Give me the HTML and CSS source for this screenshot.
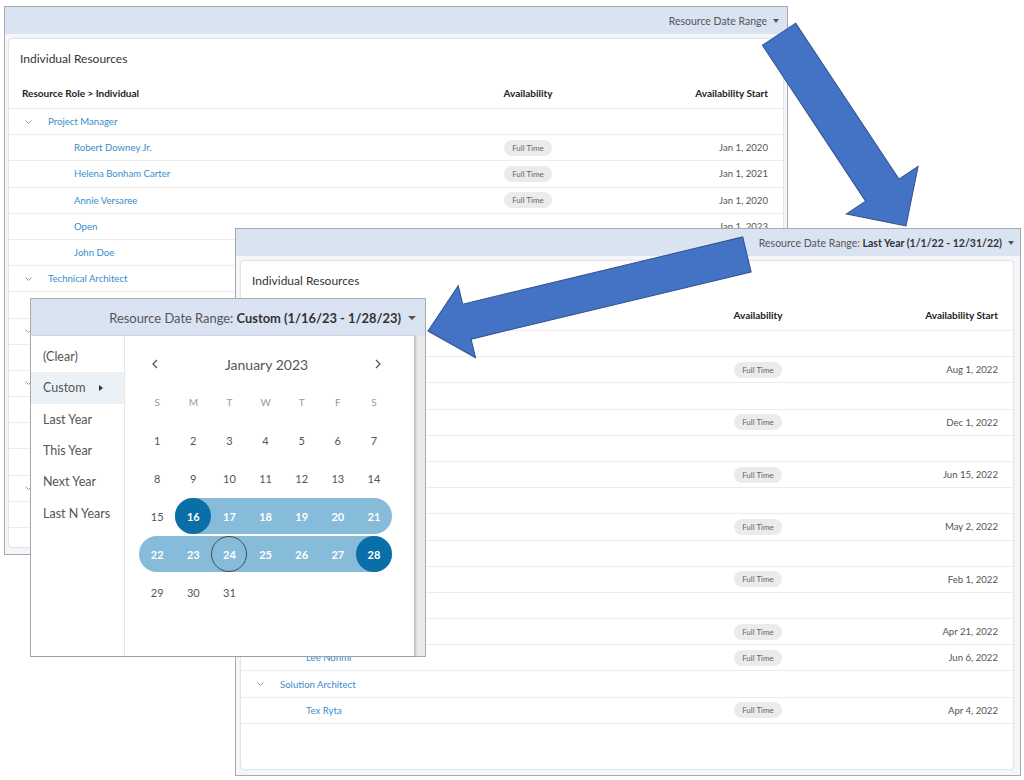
FILE: index.html
```html
<!DOCTYPE html>
<html>
<head>
<meta charset="utf-8">
<link rel="stylesheet" href="styles.css">
</head>
<body>
<div class="canvas">

  <!-- Window A: no range -->
  <div class="win win-a">
    <div class="win-head"><span>Resource Date Range</span><i class="caret"></i></div>
    <div class="win-body">
      <div class="card">
        <div class="card-title">Individual Resources</div>
        <div class="row head"><div class="c-name">Resource Role &gt; Individual</div><div class="c-avail">Availability</div><div class="c-start">Availability Start</div></div>
        <div class="row role"><div class="c-name"><svg class="chev" viewBox="0 0 7 4"><polyline points="0.5,0.5 3.5,3.5 6.5,0.5"/></svg>Project Manager</div><div></div><div></div></div>
        <div class="row ind"><div class="c-name">Robert Downey Jr.</div><div class="c-avail"><span class="pill">Full Time</span></div><div class="c-start">Jan 1, 2020</div></div>
        <div class="row ind"><div class="c-name">Helena Bonham Carter</div><div class="c-avail"><span class="pill">Full Time</span></div><div class="c-start">Jan 1, 2021</div></div>
        <div class="row ind"><div class="c-name">Annie Versaree</div><div class="c-avail"><span class="pill">Full Time</span></div><div class="c-start">Jan 1, 2020</div></div>
        <div class="row ind"><div class="c-name">Open</div><div class="c-avail"></div><div class="c-start">Jan 1, 2023</div></div>
        <div class="row ind"><div class="c-name">John Doe</div><div></div><div></div></div>
        <div class="row role"><div class="c-name"><svg class="chev" viewBox="0 0 7 4"><polyline points="0.5,0.5 3.5,3.5 6.5,0.5"/></svg>Technical Architect</div><div></div><div></div></div>
        <div class="row ind"><div class="c-name"></div><div></div><div></div></div>
        <div class="row role"><div class="c-name"><svg class="chev" viewBox="0 0 7 4"><polyline points="0.5,0.5 3.5,3.5 6.5,0.5"/></svg></div><div></div><div></div></div>
        <div class="row ind"><div class="c-name"></div><div></div><div></div></div>
        <div class="row role"><div class="c-name"><svg class="chev" viewBox="0 0 7 4"><polyline points="0.5,0.5 3.5,3.5 6.5,0.5"/></svg></div><div></div><div></div></div>
        <div class="row ind"><div class="c-name"></div><div></div><div></div></div>
        <div class="row ind"><div class="c-name"></div><div></div><div></div></div>
        <div class="row ind"><div class="c-name"></div><div></div><div></div></div>
        <div class="row role"><div class="c-name"><svg class="chev" viewBox="0 0 7 4"><polyline points="0.5,0.5 3.5,3.5 6.5,0.5"/></svg></div><div></div><div></div></div>
        <div class="row ind"><div class="c-name"></div><div></div><div></div></div>
      </div>
    </div>
  </div>

  <!-- Window B: Last Year -->
  <div class="win win-b">
    <div class="win-head"><span>Resource Date Range: <b>Last Year (1/1/22 - 12/31/22)</b></span><i class="caret"></i></div>
    <div class="win-body">
      <div class="card">
        <div class="card-title">Individual Resources</div>
        <div class="row head"><div class="c-name"></div><div class="c-avail">Availability</div><div class="c-start">Availability Start</div></div>
        <div class="row role"><div class="c-name"></div><div></div><div></div></div>
        <div class="row ind"><div class="c-name"></div><div class="c-avail"><span class="pill">Full Time</span></div><div class="c-start">Aug 1, 2022</div></div>
        <div class="row role"><div class="c-name"></div><div></div><div></div></div>
        <div class="row ind"><div class="c-name"></div><div class="c-avail"><span class="pill">Full Time</span></div><div class="c-start">Dec 1, 2022</div></div>
        <div class="row role"><div class="c-name"></div><div></div><div></div></div>
        <div class="row ind"><div class="c-name"></div><div class="c-avail"><span class="pill">Full Time</span></div><div class="c-start">Jun 15, 2022</div></div>
        <div class="row role"><div class="c-name"></div><div></div><div></div></div>
        <div class="row ind"><div class="c-name"></div><div class="c-avail"><span class="pill">Full Time</span></div><div class="c-start">May 2, 2022</div></div>
        <div class="row role"><div class="c-name"></div><div></div><div></div></div>
        <div class="row ind"><div class="c-name"></div><div class="c-avail"><span class="pill">Full Time</span></div><div class="c-start">Feb 1, 2022</div></div>
        <div class="row role"><div class="c-name"></div><div></div><div></div></div>
        <div class="row ind"><div class="c-name"></div><div class="c-avail"><span class="pill">Full Time</span></div><div class="c-start">Apr 21, 2022</div></div>
        <div class="row ind"><div class="c-name">Lee Nohmi</div><div class="c-avail"><span class="pill">Full Time</span></div><div class="c-start">Jun 6, 2022</div></div>
        <div class="row role"><div class="c-name"><svg class="chev" viewBox="0 0 7 4"><polyline points="0.5,0.5 3.5,3.5 6.5,0.5"/></svg>Solution Architect</div><div></div><div></div></div>
        <div class="row ind"><div class="c-name">Tex Ryta</div><div class="c-avail"><span class="pill">Full Time</span></div><div class="c-start">Apr 4, 2022</div></div>
      </div>
    </div>
  </div>

  <!-- Window C: custom range picker -->
  <div class="win win-c">
    <div class="win-head"><span>Resource Date Range: <b>Custom (1/16/23 - 1/28/23)</b></span><i class="caret"></i></div>
    <div class="drop-area">
      <div class="dropdown">
        <ul class="menu">
          <li>(Clear)</li>
          <li class="active">Custom<i class="tri"></i></li>
          <li>Last Year</li>
          <li>This Year</li>
          <li>Next Year</li>
          <li>Last N Years</li>
        </ul>
        <div class="cal">
          <div class="cal-head">
            <svg class="nav" viewBox="0 0 6 10"><polyline points="5,1 1,5 5,9"/></svg>
            <span class="month">January 2023</span>
            <svg class="nav" viewBox="0 0 6 10"><polyline points="1,1 5,5 1,9"/></svg>
          </div>
          <div class="wk"><span>S</span><span>M</span><span>T</span><span>W</span><span>T</span><span>F</span><span>S</span></div>
          <div class="days">
            <div class="d"><span class="b">1</span></div>
            <div class="d"><span class="b">2</span></div>
            <div class="d"><span class="b">3</span></div>
            <div class="d"><span class="b">4</span></div>
            <div class="d"><span class="b">5</span></div>
            <div class="d"><span class="b">6</span></div>
            <div class="d"><span class="b">7</span></div>
            <div class="d"><span class="b">8</span></div>
            <div class="d"><span class="b">9</span></div>
            <div class="d"><span class="b">10</span></div>
            <div class="d"><span class="b">11</span></div>
            <div class="d"><span class="b">12</span></div>
            <div class="d"><span class="b">13</span></div>
            <div class="d"><span class="b">14</span></div>
            <div class="d"><span class="b">15</span></div>
            <div class="d in first"><span class="b"><span class="dot sel">16</span></span></div>
            <div class="d in"><span class="b">17</span></div>
            <div class="d in"><span class="b">18</span></div>
            <div class="d in"><span class="b">19</span></div>
            <div class="d in"><span class="b">20</span></div>
            <div class="d in last"><span class="b">21</span></div>
            <div class="d in first"><span class="b">22</span></div>
            <div class="d in"><span class="b">23</span></div>
            <div class="d in"><span class="b"><span class="dot today">24</span></span></div>
            <div class="d in"><span class="b">25</span></div>
            <div class="d in"><span class="b">26</span></div>
            <div class="d in"><span class="b">27</span></div>
            <div class="d in last"><span class="b"><span class="dot sel">28</span></span></div>
            <div class="d"><span class="b">29</span></div>
            <div class="d"><span class="b">30</span></div>
            <div class="d"><span class="b">31</span></div>
          </div>
        </div>
      </div>
    </div>
  </div>

  <!-- Callout arrows -->
  <svg class="arrows" width="1024" height="780" viewBox="0 0 1024 780">
    <polygon transform="translate(906 226) rotate(56.5)" points="-230,-20 -43,-20 -43,-43 0,0 -43,43 -43,20 -230,20"/>
    <polygon transform="translate(428 331) rotate(166.5)" points="-328,-18 -40,-18 -40,-37 0,0 -40,37 -40,18 -328,18"/>
  </svg>
</div>
</body>
</html>
```

FILE: styles.css
```css
* { box-sizing: border-box; }
html, body { margin: 0; padding: 0; background: #fff; }
body { font-family: Lato, "Open Sans", "Liberation Sans", sans-serif; color: #555; }

.canvas { position: relative; width: 1024px; height: 780px; overflow: hidden; }

/* windows placed on a free canvas (screenshot collage) */
.win {
  position: absolute;
  display: flex;
  flex-direction: column;
  border: 1px solid #a8aab0;
  background: #f5f6f9;
}
.win-a { left: 4px; top: 6px; width: 784px; height: 549px; }
.win-b { left: 235px; top: 228px; width: 786px; height: 548px; }
.win-c { left: 30px; top: 298px; width: 396px; height: 359px; background: #e9e9ea; }

.win-head {
  flex: none;
  height: 27px;
  background: #dae3f2;
  display: flex;
  align-items: center;
  justify-content: flex-end;
  padding-right: 8px;
  font-size: 10.5px;
  color: #555;
  white-space: nowrap;
}
.win-head b { font-weight: 700; color: #333; }
.caret {
  width: 0; height: 0;
  border-left: 3.5px solid transparent;
  border-right: 3.5px solid transparent;
  border-top: 4px solid #555;
  margin-left: 6px;
}
.win-b .win-head { padding-right: 6px; }
.win-c .win-head { height: 37px; font-size: 12.9px; padding-right: 9px; }
.win-c .caret { border-left-width: 4px; border-right-width: 4px; border-top-width: 4.5px; margin-left: 7px; }

.win-body { flex: 1; display: flex; min-height: 0; padding: 5px 4px 7px 4px; }
.win-b .win-body { padding: 5px 7px 6px 5px; }

.card {
  flex: 1;
  background: #fff;
  border-radius: 3px;
  box-shadow: 0 0 2px rgba(0, 0, 0, 0.28);
  display: flex;
  flex-direction: column;
  overflow: hidden;
}
.card-title { flex: none; height: 38px; padding: 13px 0 0 11px; font-size: 12px; line-height: 14px; color: #333; }

.row {
  flex: none;
  display: grid;
  grid-template-columns: 1fr 100px 205px;
  align-items: center;
  height: 26.2px;
  border-bottom: 1px solid #ececec;
  font-size: 9.6px;
  white-space: nowrap;
}
.row.head { height: 32px; font-weight: 700; color: #222; font-size: 10px; }
.row.head .c-name { padding-left: 13px; }
.c-avail { text-align: center; }
.c-start { text-align: right; padding-right: 15px; color: #555; }
.row.head .c-start { color: #222; }
.row.role .c-name { padding-left: 16px; color: #3a8dca; display: flex; align-items: center; }
.row.ind .c-name { padding-left: 65px; color: #3a8dca; }
.chev { width: 7px; height: 4px; margin-right: 16px; fill: none; stroke: #9a9a9a; stroke-width: 1; flex: none; }

.pill {
  display: inline-block;
  width: 48px;
  height: 16px;
  line-height: 16px;
  border-radius: 8px;
  background: #ebebeb;
  color: #666;
  font-size: 8px;
  text-align: center;
}

/* dropdown in window C */
.drop-area { flex: 1; display: flex; min-height: 0; }
.dropdown {
  width: 384px;
  background: #fff;
  display: flex;
  border-right: 1px solid #c4c4c4;
  box-shadow: 1px 0 2px rgba(0, 0, 0, 0.18);
}
.menu {
  list-style: none;
  margin: 0;
  padding: 5px 0 0 0;
  width: 95px;
  border-right: 1px solid #e6e6e6;
  font-size: 12.5px;
  color: #555;
}
.menu li { height: 31.3px; display: flex; align-items: center; padding-left: 12px; white-space: nowrap; }
.menu li.active { background: #eaf2f8; }
.tri {
  width: 0; height: 0;
  border-top: 3.5px solid transparent;
  border-bottom: 3.5px solid transparent;
  border-left: 4px solid #333;
  margin-left: 14px;
}

.cal { flex: 1; padding: 9px 22px 0 14px; }
.cal-head { height: 38px; display: flex; align-items: center; justify-content: space-between; padding: 0 11px 0 13px; }
.nav { width: 6px; height: 10px; fill: none; stroke: #555; stroke-width: 1.3; }
.month { font-size: 14px; color: #555; }
.wk { display: grid; grid-template-columns: repeat(7, 36.14px); height: 38px; align-items: center; font-size: 10px; color: #9a9a9a; text-align: center; }
.days { display: grid; grid-template-columns: repeat(7, 36.14px); grid-auto-rows: 38px; }
.d { display: flex; align-items: center; }
.d .b { width: 100%; height: 36px; display: flex; align-items: center; justify-content: center; font-size: 11px; color: #555; }
.d.in .b { background: #86bbda; color: #fff; font-weight: 700; }
.d.first .b { border-radius: 18px 0 0 18px; }
.d.last .b { border-radius: 0 18px 18px 0; }
.dot { width: 36px; height: 36px; flex: none; border-radius: 50%; display: flex; align-items: center; justify-content: center; }
.dot.sel { background: #0a6fa8; }
.dot.today { border: 1px solid #4a4a4a; }

.arrows { position: absolute; left: 0; top: 0; pointer-events: none; }
.arrows polygon { fill: #4472c4; stroke: #2f528f; stroke-width: 1; }
```
